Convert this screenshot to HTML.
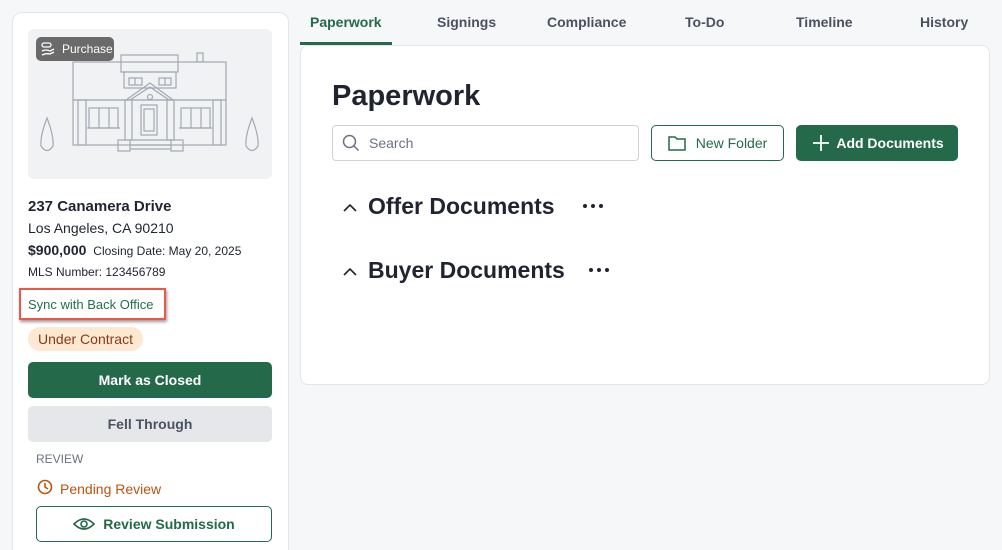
<!DOCTYPE html>
<html><head><meta charset="utf-8"><style>
*{box-sizing:border-box;margin:0;padding:0}
html,body{width:1002px;height:550px;overflow:hidden}
body{background:#f6f7f9;font-family:"Liberation Sans",sans-serif;color:#1f2430;position:relative}
.abs{position:absolute}
.card{left:12px;top:12px;width:277px;height:560px;background:#fff;border:1px solid #e3e5e8;border-radius:10px}
.img{left:28px;top:29px;width:244px;height:150px;background:#f1f2f4;border-radius:6px}
.badge{left:36px;top:37px;width:78px;height:24px;background:#6a6a6a;border-radius:5px;color:#fff;font-size:12px;line-height:24px;padding-left:26px}
.t{white-space:nowrap}
.btn{border-radius:5px;text-align:center;font-weight:bold;font-size:14px}
.tab{top:14px;font-size:14px;font-weight:bold;color:#4a5160}
.main{left:300px;top:45px;width:690px;height:340px;background:#fff;border:1px solid #e3e5e8;border-radius:8px}
</style></head><body>
<div class="abs card"></div>
<div class="abs img"></div>
<svg class="abs" style="left:0;top:0" width="300" height="180" fill="none" stroke="#a3a8b2" stroke-width="1.2">
<rect x="73" y="62" width="153" height="38"/>
<rect x="121" y="55" width="57" height="17"/>
<rect x="124" y="72" width="52" height="16"/>
<rect x="129" y="78" width="13" height="7"/><rect x="159" y="78" width="12" height="7"/>
<line x1="135" y1="78" x2="135" y2="85"/><line x1="165" y1="78" x2="165" y2="85"/>
<rect x="197" y="53" width="6" height="9"/>
<polyline points="126,100 150,83 173,100"/><polyline points="130,100 150,87 169,100"/>
<circle cx="150" cy="97" r="2.5"/>
<rect x="73" y="100" width="153" height="45"/>
<rect x="78" y="100" width="8" height="45"/><rect x="213" y="100" width="8" height="45"/>
<rect x="125" y="100" width="7" height="40"/><rect x="167" y="100" width="7" height="40"/>
<rect x="89" y="108" width="29" height="20"/><rect x="181" y="108" width="29" height="20"/>
<line x1="99" y1="108" x2="99" y2="128"/><line x1="109" y1="108" x2="109" y2="128"/>
<line x1="191" y1="108" x2="191" y2="128"/><line x1="201" y1="108" x2="201" y2="128"/>
<line x1="87" y1="128" x2="120" y2="128"/><line x1="179" y1="128" x2="212" y2="128"/>
<rect x="141" y="105" width="16" height="30"/><rect x="144" y="109" width="10" height="22"/>
<rect x="118" y="140" width="12" height="11"/><rect x="171" y="140" width="12" height="11"/>
<line x1="130" y1="140" x2="171" y2="140"/><line x1="130" y1="145" x2="171" y2="145"/><line x1="130" y1="149" x2="171" y2="149"/>
<path d="M47 118 Q40 136 41 146 Q47 155 53 146 Q54 136 47 118Z"/><path d="M252 118 Q245 136 246 146 Q252 155 258 146 Q259 136 252 118Z"/>
</svg>
<div class="abs badge">Purchase</div>
<svg class="abs" style="left:40px;top:41px" width="16" height="16" fill="none" stroke="#fff" stroke-width="1.3"><rect x="2" y="2" width="9" height="4" rx="2"/><path d="M2 10 Q6 8 10 10 L14 8 M2 14 Q6 12 10 13 L14 11"/></svg>
<div class="abs t" style="left:28px;top:198px;font-size:15px;font-weight:bold">237 Canamera Drive</div>
<div class="abs t" style="left:28px;top:220px;font-size:14px">Los Angeles, CA 90210</div>
<div class="abs t" style="left:28px;top:242px;font-size:14px;font-weight:bold">$900,000 <span style="font-weight:normal;font-size:12px;margin-left:3px">Closing Date: May 20, 2025</span></div>
<div class="abs t" style="left:28px;top:265px;font-size:12px">MLS Number: 123456789</div>
<div class="abs" style="left:19px;top:288px;width:147px;height:32px;border:2.5px solid #e8594a;box-shadow:1px 2px 3px rgba(0,0,0,.4)"></div>
<div class="abs t" style="left:28px;top:297px;font-size:13px;color:#23704a">Sync with Back Office</div>
<div class="abs t" style="left:28px;top:327px;height:24px;width:115px;background:#fde8d2;border-radius:12px;color:#8a3a14;font-size:14px;line-height:24px;text-align:center">Under Contract</div>
<div class="abs btn" style="left:28px;top:362px;width:244px;height:36px;line-height:36px;background:#24694a;color:#fff">Mark as Closed</div>
<div class="abs btn" style="left:28px;top:406px;width:244px;height:36px;line-height:36px;background:#e5e7eb;color:#4b5261">Fell Through</div>
<div class="abs t" style="left:36px;top:452px;font-size:12px;color:#6b7280">REVIEW</div>
<svg class="abs" style="left:37px;top:479px" width="16" height="16" fill="none" stroke="#c0520f" stroke-width="1.6"><circle cx="8" cy="8" r="6.5"/><path d="M8 4v4l3 2"/></svg>
<div class="abs t" style="left:60px;top:481px;font-size:14px;color:#c0520f">Pending Review</div>
<div class="abs btn" style="left:36px;top:506px;width:236px;height:36px;border:1px solid #24694a;color:#24694a;display:flex;align-items:center;justify-content:center;gap:8px">
<svg width="22" height="16" fill="none" stroke="#24694a" stroke-width="1.6"><path d="M1 8 Q11 -2 21 8 Q11 18 1 8Z"/><circle cx="11" cy="8" r="3"/></svg><span>Review Submission</span></div>

<div class="abs tab" style="left:310px;color:#24694a">Paperwork</div>
<div class="abs" style="left:300px;top:42px;width:92px;height:3px;background:#24694a"></div>
<div class="abs tab" style="left:437px">Signings</div>
<div class="abs tab" style="left:547px">Compliance</div>
<div class="abs tab" style="left:685px">To-Do</div>
<div class="abs tab" style="left:796px">Timeline</div>
<div class="abs tab" style="left:920px">History</div>
<div class="abs main"></div>
<div class="abs t" style="left:332px;top:80px;font-size:29px;font-weight:bold">Paperwork</div>
<div class="abs" style="left:332px;top:125px;width:307px;height:36px;border:1px solid #cfd3d9;border-radius:4px"></div>
<svg class="abs" style="left:342px;top:134px" width="18" height="18" fill="none" stroke="#6b7280" stroke-width="1.5"><circle cx="7.5" cy="7.5" r="6"/><path d="M12 12l4.5 4.5"/></svg>
<div class="abs t" style="left:369px;top:135px;font-size:14px;color:#6b7280">Search</div>
<div class="abs btn" style="left:651px;top:125px;width:133px;height:36px;line-height:34px;border:1px solid #24694a;color:#24694a;font-weight:normal;padding-left:28px">New Folder</div>
<svg class="abs" style="left:667px;top:134px" width="20" height="18" fill="none" stroke="#24694a" stroke-width="1.5"><path d="M2 3h6l2 2h8v11H2z"/></svg>
<div class="abs btn" style="left:796px;top:125px;width:162px;height:36px;line-height:36px;background:#24694a;color:#fff;padding-left:26px">Add Documents</div>
<svg class="abs" style="left:812px;top:134px" width="18" height="18" stroke="#fff" stroke-width="1.8"><path d="M9 1v16M1 9h16"/></svg>
<svg class="abs" style="left:342px;top:201px" width="16" height="12" fill="none" stroke="#1f2430" stroke-width="1.6"><path d="M2 10l6-6 6 6"/></svg>
<div class="abs t" style="left:368px;top:193px;font-size:23px;font-weight:bold">Offer Documents</div>
<svg class="abs" style="left:582px;top:203px" width="22" height="6" fill="#1f2430"><circle cx="3" cy="3" r="2"/><circle cx="11" cy="3" r="2"/><circle cx="19" cy="3" r="2"/></svg>
<svg class="abs" style="left:342px;top:265px" width="16" height="12" fill="none" stroke="#1f2430" stroke-width="1.6"><path d="M2 10l6-6 6 6"/></svg>
<div class="abs t" style="left:368px;top:257px;font-size:23px;font-weight:bold">Buyer Documents</div>
<svg class="abs" style="left:588px;top:267px" width="22" height="6" fill="#1f2430"><circle cx="3" cy="3" r="2"/><circle cx="11" cy="3" r="2"/><circle cx="19" cy="3" r="2"/></svg>
</body></html>
